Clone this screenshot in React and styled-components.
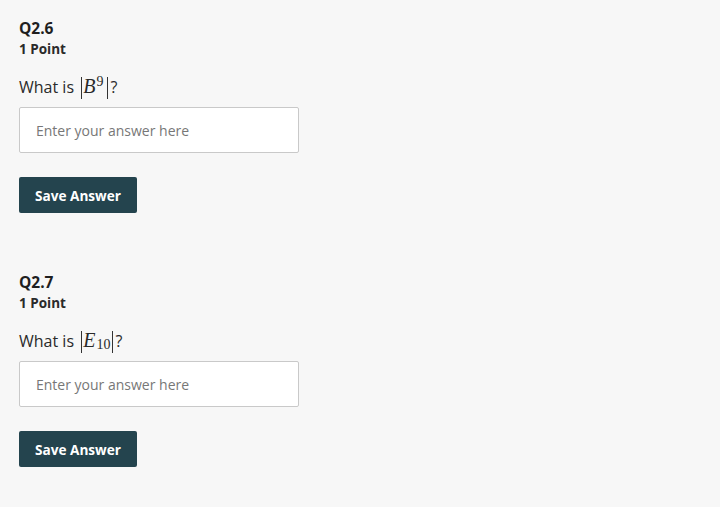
import React from 'react';
import styled, { createGlobalStyle } from 'styled-components';

const GlobalStyle = createGlobalStyle`
  html, body {
    margin: 0;
    padding: 0;
    background: #f7f7f7;
  }
  body {
    font-family: "Open Sans", "Noto Sans", sans-serif;
    color: #222;
  }
`;

const Page = styled.div`
  padding: 16px 19px 0;
  display: flex;
  flex-direction: column;
  gap: 57px;
`;

const Question = styled.section`
  display: flex;
  flex-direction: column;
`;

const Title = styled.div`
  font-size: 15.5px;
  font-weight: 700;
  line-height: 25px;
  color: #1f1f1f;
`;

const Points = styled.div`
  font-size: 13.5px;
  font-weight: 700;
  line-height: 16px;
  color: #2a2a2a;
`;

const Prompt = styled.p`
  margin: 19px 0 0;
  font-size: 16px;
  line-height: 22px;
  color: #2a2a2a;
`;

const Math = styled.span`
  font-family: "Liberation Serif", "DejaVu Serif", serif;
  font-size: 20px;
  line-height: 0;
  color: #2a2a2a;
  margin-left: 2px;
`;

const Var = styled.i`
  font-style: italic;
  padding-right: 1px;
`;

const Bar = styled.span`
  display: inline-block;
  width: 1px;
  height: 22px;
  margin: 0 ${p => (p.$end ? '2px' : '1px')} 0 1px;
  background: #333;
  vertical-align: -6px;
`;

const Script = styled.span`
  display: inline-block;
  font-size: 14px;
  line-height: 0;
  position: relative;
  top: ${p => (p.$sup ? '-7px' : '2px')};
  margin-right: ${p => (p.$sup ? '3px' : '1px')};
`;

const Answer = styled.input`
  margin-top: 8px;
  box-sizing: border-box;
  width: 280px;
  height: 46px;
  padding: 0 16px;
  border: 1px solid #c9c9c9;
  border-radius: 2px;
  background: #fff;
  font-family: "Open Sans", sans-serif;
  font-size: 14px;
  color: #333;
  &::placeholder {
    color: #777;
  }
`;

const SaveButton = styled.button`
  margin-top: 24px;
  align-self: flex-start;
  height: 36px;
  width: 118px;
  padding: 0;
  border: none;
  border-radius: 2px;
  background: #24444e;
  color: #fff;
  font-family: "Open Sans", sans-serif;
  font-size: 13.6px;
  font-weight: 700;
  cursor: pointer;
`;

const questions = [
  {
    id: 'Q2.6',
    math: (
      <Math>
        <Bar /><Var>B</Var><Script $sup>9</Script><Bar $end />
      </Math>
    ),
  },
  {
    id: 'Q2.7',
    math: (
      <Math>
        <Bar /><Var>E</Var><Script>10</Script><Bar $end />
      </Math>
    ),
  },
];

export default function App() {
  return (
    <>
      <GlobalStyle />
      <Page>
        {questions.map(q => (
          <Question key={q.id}>
            <Title>{q.id}</Title>
            <Points>1 Point</Points>
            <Prompt>What is {q.math}?</Prompt>
            <Answer placeholder="Enter your answer here" />
            <SaveButton>Save Answer</SaveButton>
          </Question>
        ))}
      </Page>
    </>
  );
}
